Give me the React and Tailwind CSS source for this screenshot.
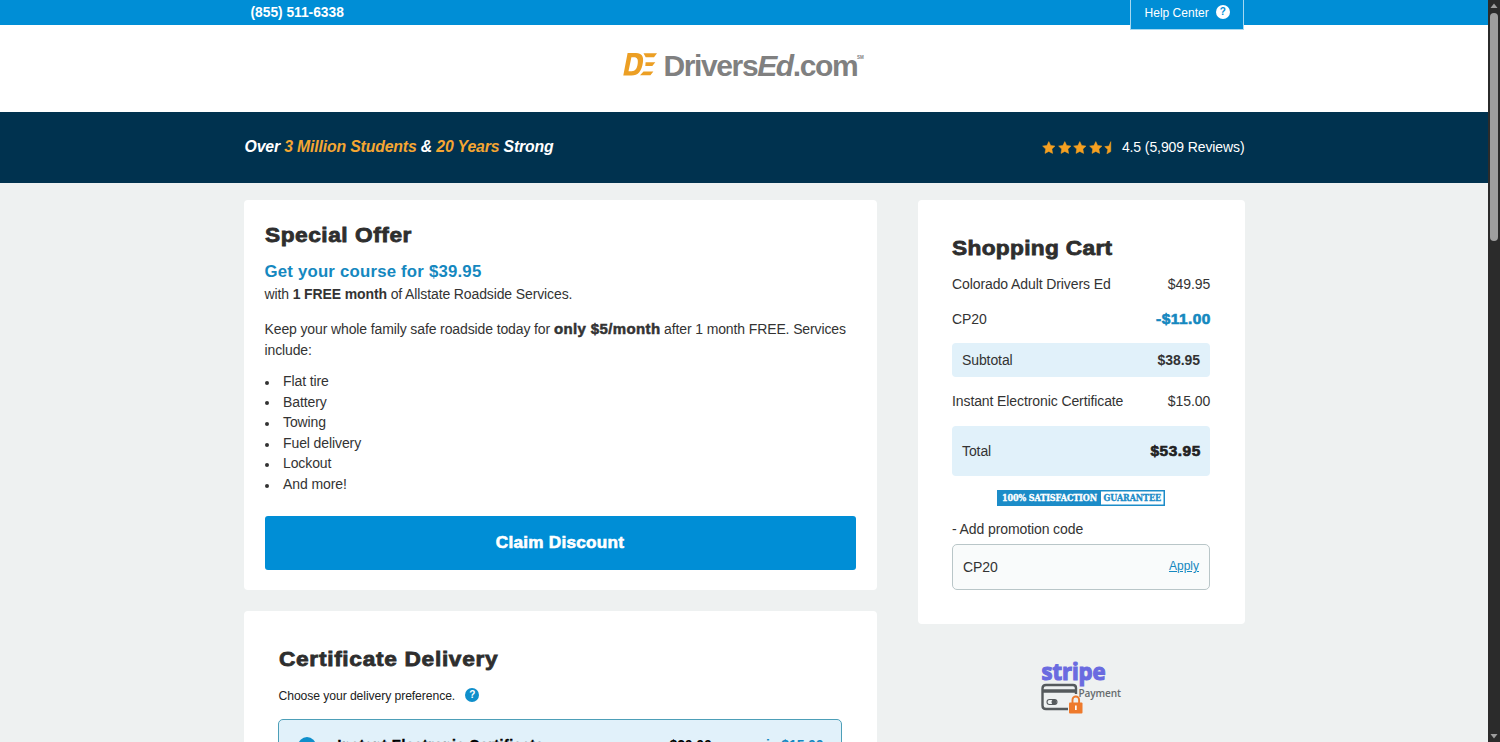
import React from "react";

const HEAVY = "inline-block origin-left scale-x-108 font-bold [-webkit-text-stroke:0.8px_currentColor]";

function Star({ half }) {
  return (
    <svg width="15.5" height="14" viewBox="0 0 15.5 14" fill="#f5a021" stroke="#f5a021" strokeWidth=".5" strokeLinejoin="round" aria-hidden="true">
      {half ? (
        <path d="M6.8 .6v10l-3.900 2.200.9-4.200L.7 5.600l4.200-.5z" />
      ) : (
        <path d="M6.800.6l1.900 3.900 4.300.6-3.100 3 .7 4.300-3.800-2-3.800 2 .7-4.300-3.100-3 4.300-.6z" />
      )}
    </svg>
  );
}

function HelpDot({ className }) {
  return (
    <span className={"flex h-[14px] w-[14px] items-center justify-center rounded-full text-[10px] leading-none font-bold " + className}>
      ?
    </span>
  );
}

function TopBar() {
  return (
    <div className="h-[25px] bg-[#008ed6] text-white">
      <div className="mx-auto flex h-full w-[1001px] items-start justify-between">
        <span className="pl-[7px] text-[13.8px] leading-[25px] font-bold tracking-[-0.02px]">(855) 511-6338</span>
        <div className="mr-[0.5px] flex h-[30px] w-[114px] items-start gap-[7px] border-x border-b border-[#a5d8f1] bg-[#008ed6] pl-[13.500px]">
          <span className="text-[12px] leading-[26px] tracking-[0.02px]">Help Center</span>
          <HelpDot className="mt-[5px] bg-white text-[#008ed6]" />
        </div>
      </div>
    </div>
  );
}

function Logo() {
  return (
    <svg width="244" height="36" viewBox="0 0 244 36" role="img" aria-label="DriversEd.com">
      <path fill="#ec9f24" fillRule="evenodd" d="M5.600 6H14c5.800 0 7.900 3.600 6.900 9.500C19.700 24 16.300 28.500 9.500 28.500H1.300zM9.400 10.200 6.500 24.200h3.200c3.600 0 5.300-2.600 6-7.400.6-4.400-.3-6.600-3.800-6.600z" />
      <path fill="#ec9f24" d="M21.500 6.300H35l-3 3.900h-8.300zM23.600 15.200h9.700l-3 3.800h-7zM21.500 24.400h9.900l-3 3.900H18z" />
      <text x="41.500" y="28.500" fill="#808080" fontFamily="Liberation Sans, Arial, sans-serif" fontSize="30" fontWeight="700" textLength="195" lengthAdjust="spacing">
        Drivers<tspan fontStyle="italic">Ed</tspan>.com
      </text>
      <text x="235" y="11.500" fill="#808080" fontFamily="Liberation Sans, Arial, sans-serif" fontSize="4.500" fontWeight="700">SM</text>
    </svg>
  );
}

function Banner() {
  return (
    <div className="h-[71px] bg-[#00324f] text-white">
      <div className="mx-auto flex h-full w-[1001px] items-center justify-between pl-px">
        <p className="mb-[2px] text-[15.8px] font-bold tracking-[-0.150px] italic">
          Over <span className="text-[#f5a632]">3 Million Students</span> &amp; <span className="text-[#f5a632]">20 Years</span> Strong
        </p>
        <div className="flex items-center">
          <div className="flex">
            <Star /><Star /><Star /><Star /><Star half />
          </div>
          <span className="pl-[2px] tracking-[-0.1px]">4.5 (5,909 Reviews)</span>
        </div>
      </div>
    </div>
  );
}

function SpecialOffer() {
  const services = ["Flat tire", "Battery", "Towing", "Fuel delivery", "Lockout", "And more!"];
  return (
    <section className="h-[390px] rounded-[4px] bg-white px-[21px] pt-[20px]">
      <h2 className="text-[21px] leading-[30px] text-[#2e2e2e]"><span className={HEAVY + " tracking-[0.5px]"}>Special Offer</span></h2>
      <h3 className="mt-[10px] text-[16.800px] leading-[24px] font-bold tracking-[0.2px] text-[#1588bf]">Get your course for $39.95</h3>
      <p className="leading-[21px] tracking-[-0.120px]">with <b>1 FREE month</b> of Allstate Roadside Services.</p>
      <p className="mt-[14px] leading-[21px] tracking-[-0.12px]">
        Keep your whole family safe roadside today for{" "}
        <b className="mr-[7px] inline-block origin-left scale-x-107 tracking-[0.350px] [-webkit-text-stroke:0.5px_currentColor]">only $5/month</b>{" "}
        after 1 month FREE. Services include:
      </p>
      <ul className="mt-[10px] leading-[20.600px]">
        {services.map((s) => (
          <li key={s} className="flex items-center">
            <span className="mt-[3px] mr-[14.500px] h-[4px] w-[4px] rounded-full bg-[#333]" />
            {s}
          </li>
        ))}
      </ul>
      <button className="mt-[21px] flex h-[54px] w-full items-center justify-center rounded-[3px] bg-[#008ed6] text-[16px] text-white">
        <span className="scale-x-107 font-bold tracking-[0.25px] [-webkit-text-stroke:0.6px_currentColor]">Claim Discount</span>
      </button>
    </section>
  );
}

function CertificateDelivery() {
  return (
    <section className="h-[300px] rounded-[4px] bg-white px-[35px] pt-[33px]">
      <h2 className="text-[21px] leading-[30px] text-[#2e2e2e]"><span className={HEAVY + " tracking-[0.640px]"}>Certificate Delivery</span></h2>
      <div className="mt-[12px] flex h-[20px] items-center text-[12.200px] text-[#222]">
        <span className="tracking-[-0.090px]">Choose your delivery preference.</span>
        <HelpDot className="mb-[3px] ml-[10px] bg-[#0f8fcb] text-white" />
      </div>
      <div className="-ml-px mt-[13px] flex h-[80px] w-[564px] rounded-[5px] border border-[#4d9fb8] bg-[#e1f1fa] pt-[17px] pr-[17px] pl-[19px] text-[14px] leading-[17px] font-bold text-black">
        <span className="h-[18px] w-[18px] rounded-full bg-[#0f8fcb]" />
        <span className="ml-[22px] w-[332px] tracking-[0.550px] [-webkit-text-stroke:0.4px_currentColor]">Instant Electronic Certificate</span>
        <span>$20.00</span>
        <span className="ml-auto text-[#1588bf]">is $15.00</span>
      </div>
    </section>
  );
}

function Row({ label, children, className }) {
  return (
    <div className={"flex items-center justify-between " + className}>
      <span>{label}</span>
      {children}
    </div>
  );
}

function Cart() {
  return (
    <section className="h-[424px] rounded-[4px] bg-white pt-[33px] pr-[35px] pl-[34px]">
      <h2 className="text-[21px] leading-[30px] text-[#2e2e2e]"><span className={HEAVY + " tracking-[0.3px]"}>Shopping Cart</span></h2>
      <Row label="Colorado Adult Drivers Ed" className="mt-[11px] h-[20px] pl-[0.500px]"><span className="-mr-[0.600px]">$49.95</span></Row>
      <Row label="CP20" className="mt-[15px] h-[20px] pl-[0.500px]">
        <span className="-mr-px origin-right scale-x-110 font-bold tracking-[0.450px] text-[#1588bf] [-webkit-text-stroke:0.6px_currentColor]">-$11.00</span>
      </Row>
      <Row label="Subtotal" className="mt-[14px] h-[34px] rounded-[4px] bg-[#e1f1fa] pr-[9.500px] pl-[10.500px]">
        <b className="tracking-[-0.05px]">$38.95</b>
      </Row>
      <Row label="Instant Electronic Certificate" className="mt-[14px] h-[20px] pl-[0.500px]"><span className="-mr-[0.600px]">$15.00</span></Row>
      <Row label="Total" className="mt-[15px] h-[50px] rounded-[4px] bg-[#e1f1fa] pr-[10px] pl-[10.500px]">
        <b className="-mr-px origin-right scale-x-110 tracking-[0.500px] text-[#222] [-webkit-text-stroke:0.6px_currentColor]">$53.95</b>
      </Row>
      <svg className="mx-auto mt-[14px] block" width="168" height="16" viewBox="0 0 168 16" fontFamily="DejaVu Serif, serif" fontWeight="700" fontSize="9">
        <rect x=".75" y=".75" width="166.500" height="14.500" fill="#fff" stroke="#1c8cc8" strokeWidth="1.500" />
        <rect width="104" height="16" fill="#1c8cc8" />
        <text x="5" y="11.300" fill="#fff" stroke="#fff" strokeWidth=".35" textLength="95" lengthAdjust="spacingAndGlyphs">100% SATISFACTION</text>
        <text x="106.500" y="11.300" fill="#1c8cc8" stroke="#1c8cc8" strokeWidth=".35" textLength="57.500" lengthAdjust="spacingAndGlyphs">GUARANTEE</text>
      </svg>
      <p className="mt-[13px] pl-[0.500px] leading-[20px] tracking-[-0.1px]">- Add promotion code</p>
      <Row label="CP20" className="mt-[5px] h-[46px] rounded-[5px] border border-[#b9c6c8] bg-[#f9fbfb] pr-[9.500px] pl-[10.500px]">
        <a className="mb-[2px] text-[12px] tracking-normal text-[#1588bf] underline">Apply</a>
      </Row>
    </section>
  );
}

function StripeBadge() {
  return (
    <svg className="mt-[34px] ml-[122px] block" width="86" height="58" viewBox="0 0 86 58">
      <g fill="none" stroke="#555a5c">
        <path d="M36 36V30q0-3-3-3H6q-3.500 0-3.500 3.500v17Q2.500 51 6 51h22" strokeWidth="2.400" />
        <path d="M2.500 33H36" strokeWidth="3.600" />
        <rect x="7" y="41.500" width="10" height="5" rx="2.500" strokeWidth="1.100" />
      </g>
      <circle cx="14" cy="44" r="2.500" fill="#555a5c" />
      <text x="1.500" y="22" fill="#6a6be0" stroke="#6a6be0" strokeWidth="1.200" fontFamily="Open Sans, sans-serif" fontWeight="700" fontSize="24" textLength="64" lengthAdjust="spacingAndGlyphs">stripe</text>
      <text x="38.500" y="39" fill="#666b6d" fontFamily="Open Sans, sans-serif" fontWeight="600" fontSize="10" textLength="42.500" lengthAdjust="spacingAndGlyphs">Payment</text>
      <path d="M32.500 45v-3.200a3.300 3.300 0 0 1 6.600 0V45" fill="none" stroke="#ee7a2c" strokeWidth="1.900" />
      <rect x="29" y="44.500" width="13.500" height="11" rx="1" fill="#ee7a2c" />
      <path d="M35 47.500h1.700v4.500H35z" fill="#fff" />
    </svg>
  );
}

function Scrollbar() {
  return (
    <div className="flex h-full w-[12px] shrink-0 flex-col items-center bg-[#2b2b2b]">
      <svg className="mt-[3px] shrink-0" width="8" height="6" viewBox="0 0 8 6" fill="#9e9e9e"><path d="M4 .5 7.500 5h-7z" /></svg>
      <div className="mt-[4px] h-[228px] w-[8px] shrink-0 rounded-full bg-[#9e9e9e]" />
      <svg className="mt-auto mb-[3px] shrink-0" width="8" height="6" viewBox="0 0 8 6" fill="#9e9e9e"><path d="M4 5.500.5 1h7z" /></svg>
    </div>
  );
}

export default function App() {
  return (
    <div className="flex h-[742px] w-[1500px] overflow-hidden bg-[#eef1f1] font-['Liberation_Sans',Arial,sans-serif] text-[14px] tracking-[-0.1px] text-[#333]">
      <div className="h-full w-[1488px] overflow-hidden">
        <TopBar />
        <header className="flex h-[87px] justify-center bg-white pt-[22px]"><Logo /></header>
        <Banner />
        <main className="mx-auto mt-[17px] flex w-[1001px] justify-between">
          <div className="flex w-[633px] flex-col gap-[21px]">
            <SpecialOffer />
            <CertificateDelivery />
          </div>
          <div className="w-[327px]">
            <Cart />
            <StripeBadge />
          </div>
        </main>
      </div>
      <Scrollbar />
    </div>
  );
}
